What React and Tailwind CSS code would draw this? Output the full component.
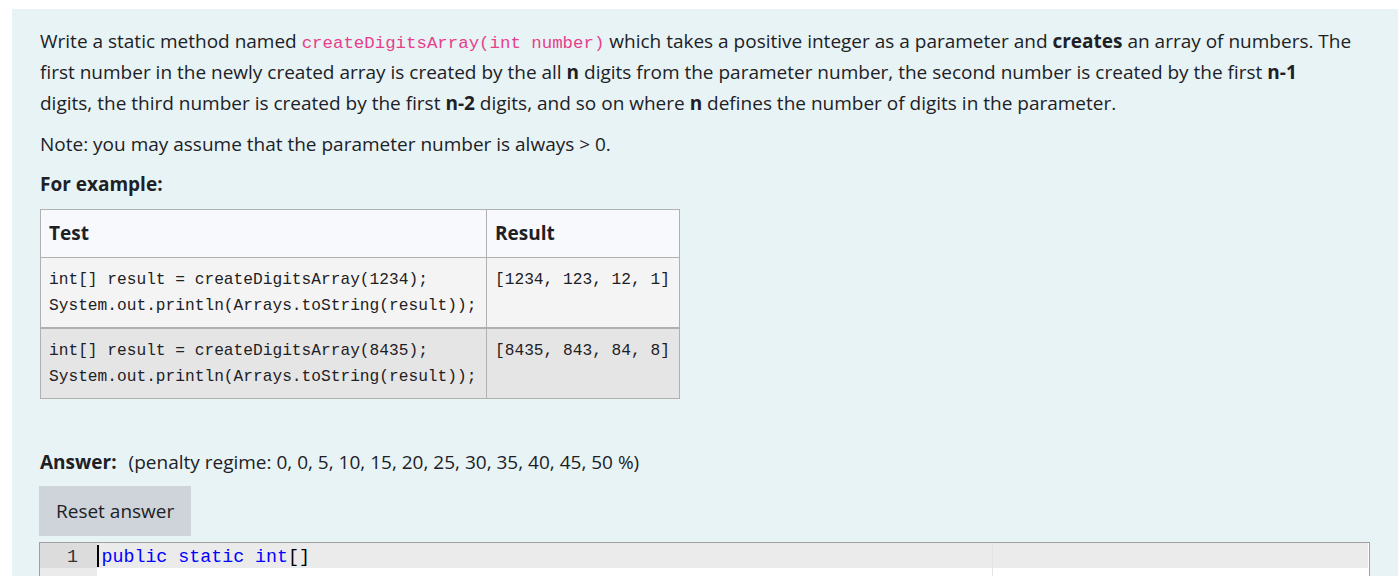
import React from 'react';

const mono = "font-['Liberation_Mono',monospace]";

const rows = [
  { code: ['int[] result = createDigitsArray(1234);', 'System.out.println(Arrays.toString(result));'], result: '[1234, 123, 12, 1]', bg: 'bg-[#f4f4f4]', line: 'border-b-2' },
  { code: ['int[] result = createDigitsArray(8435);', 'System.out.println(Arrays.toString(result));'], result: '[8435, 843, 84, 8]', bg: 'bg-[#e5e5e5]', line: '' },
];

const ExampleTable = () => (
  <table className="border-collapse w-[640px] ml-px">
    <thead>
      <tr className="bg-[#f8f9fc]">
        <th className="border border-[#b0b0b0] w-[446px] px-2 py-2 text-left font-bold leading-[31px]">Test</th>
        <th className="border border-[#b0b0b0] px-2 py-2 text-left font-bold leading-[31px]">Result</th>
      </tr>
    </thead>
    <tbody>
      {rows.map((r, i) => (
        <tr key={i} className={r.bg}>
          <td className={`border border-[#b0b0b0] ${r.line} px-2 pt-[9px] pb-[8px] align-top ${mono} text-[16.2px] leading-[26px]`}>
            {r.code.map((l, j) => (
              <div key={j} className="whitespace-pre">{l}</div>
            ))}
          </td>
          <td className={`border border-[#b0b0b0] ${r.line} px-2 pt-[9px] pb-[8px] align-top ${mono} text-[16.2px] leading-[26px] whitespace-pre`}>
            {r.result}
          </td>
        </tr>
      ))}
    </tbody>
  </table>
);

const Editor = () => (
  <div className="relative mt-[6px] h-[240px] border border-[#a0a0a0] bg-white flex">
    <div className="w-[57px] bg-[#ebebeb] flex flex-col">
      <div className={`h-[25px] bg-[#dcdcdc] text-right pr-[19px] pt-[2px] ${mono} text-[18.3px] leading-[25px] text-[#333]`}>1</div>
    </div>
    <div className="relative flex-1">
      <div className="h-[25px] bg-[#ebebeb] mr-[1px] flex items-center">
        <span className="w-[1.5px] h-[22px] bg-black" />
        <span className={`pl-[3px] pt-[3px] ${mono} text-[18.3px] leading-[25px] whitespace-pre`}>
          <span className="text-[#0000ff]">public static int</span>
          <span className="text-black">[]</span>
        </span>
      </div>
      <div className="absolute top-0 bottom-0 left-[895px] w-px bg-[#e4e4e4]" />
    </div>
  </div>
);

export default function App() {
  return (
    <div className="h-[576px] overflow-hidden bg-white pt-[9px] pl-[12px] text-[#1d2125] font-['Open_Sans',sans-serif] text-[19px] leading-[31px]">
      <div className="bg-[#e7f3f5] pl-[27px] pr-[28px] pt-[17px] pb-10">
        <p className="mb-[10px] pl-px">
          Write a static method named{' '}
          <code className={`${mono} text-[17.4px] leading-none text-[#e83e8c]`}>createDigitsArray(int number)</code>{' '}
          which takes a positive integer as a parameter and <strong>creates</strong> an array of numbers. The first number in the newly created array is created by the all <strong>n</strong> digits from the parameter number, the second number is created by the first <strong>n-1</strong>
          <br />
          digits, the third number is created by the first <strong>n-2</strong> digits, and so on where <strong>n</strong> defines the number of digits in the parameter.
        </p>
        <p className="mb-[9px] pl-px">Note: you may assume that the parameter number is always &gt; 0.</p>
        <p className="mb-[9px] pl-px font-bold">For example:</p>
        <ExampleTable />
        <div className="mt-[48px] pl-px flex gap-[12px]">
          <span className="font-bold">Answer:</span>
          <span>(penalty regime: 0, 0, 5, 10, 15, 20, 25, 30, 35, 40, 45, 50 %)</span>
        </div>
        <button className="mt-[8px] h-[50px] px-[17px] bg-[#ced4da] text-[#1d2125]">Reset answer</button>
        <Editor />
      </div>
    </div>
  );
}
